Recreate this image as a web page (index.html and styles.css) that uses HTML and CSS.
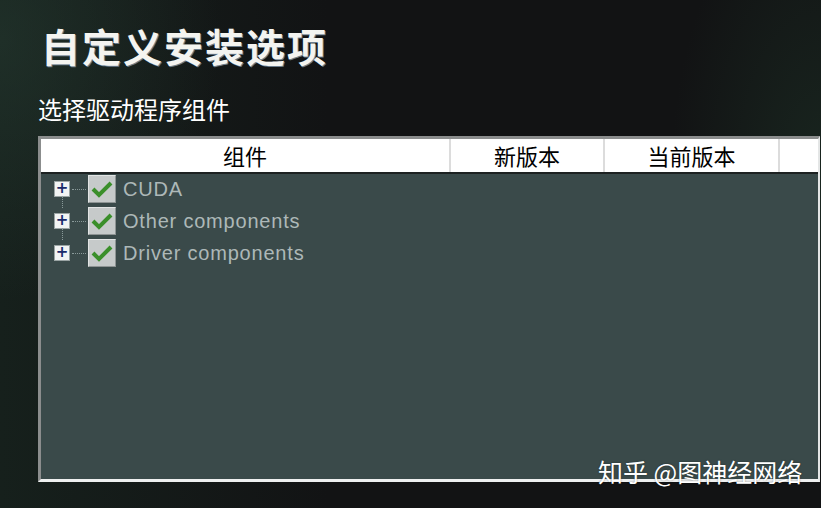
FILE: index.html
```html
<!DOCTYPE html>
<html lang="zh-CN">
<head>
  <meta charset="UTF-8">
  <title>自定义安装选项</title>
  <link rel="stylesheet" href="styles.css">
</head>
<body>
  <div class="page">
    <h1 class="title">自定义安装选项</h1>
    <p class="subtitle">选择驱动程序组件</p>

    <div class="list">
      <div class="list-head">
        <div class="col col-name">组件</div>
        <div class="col col-new">新版本</div>
        <div class="col col-cur">当前版本</div>
        <div class="col col-rest"></div>
      </div>
      <div class="list-body">
        <div class="row">
          <span class="expander">+</span>
          <span class="dots"></span>
          <span class="check"><svg width="22" height="18" viewBox="0 0 22 18"><path d="M2 9 L8 15 L20 3" fill="none" stroke="#3a8f2a" stroke-width="4"/></svg></span>
          <span class="label">CUDA</span>
        </div>
        <div class="row">
          <span class="expander">+</span>
          <span class="dots"></span>
          <span class="check"><svg width="22" height="18" viewBox="0 0 22 18"><path d="M2 9 L8 15 L20 3" fill="none" stroke="#3a8f2a" stroke-width="4"/></svg></span>
          <span class="label">Other components</span>
        </div>
        <div class="row">
          <span class="expander">+</span>
          <span class="dots"></span>
          <span class="check"><svg width="22" height="18" viewBox="0 0 22 18"><path d="M2 9 L8 15 L20 3" fill="none" stroke="#3a8f2a" stroke-width="4"/></svg></span>
          <span class="label">Driver components</span>
        </div>
      </div>
    </div>

    <div class="watermark">知乎 @图神经网络</div>
  </div>
</body>
</html>
```

FILE: styles.css
```css
body {
  margin: 0;
  width: 821px;
  height: 508px;
  overflow: hidden;
  background: #121314;
  font-family: "Noto Sans CJK SC", sans-serif;
}
.page {
  position: relative;
  height: 508px;
  padding-top: 19px;
  box-sizing: border-box;
  background:
    radial-gradient(ellipse 220px 260px at 0px 40px, rgba(40, 62, 52, 0.5), transparent),
    radial-gradient(ellipse 150px 300px at 821px 180px, rgba(30, 52, 40, 0.55), transparent),
    linear-gradient(90deg, #16201c 0%, #121314 40%, #121314 100%);
}
.title {
  margin: 0 0 0 41px;
  font-family: "Noto Sans CJK SC", serif;
  font-size: 39px;
  font-weight: bold;
  line-height: 52px;
  letter-spacing: 2px;
  color: #f4f4f0;
  text-shadow: 1px 1px 0 #6a7c8c;
}
.subtitle {
  margin: 23px 0 0 38px;
  font-size: 24px;
  line-height: 30px;
  color: #ffffff;
}
.list {
  margin: 12px 0 0 38px;
  width: 782px;
  border-top: 3px solid #8b8d8d;
  border-left: 3px solid #8b8d8d;
  border-right: 2px solid #e4e6e6;
  border-bottom: 3px solid #eef0f0;
  box-sizing: border-box;
}
.list-head {
  display: flex;
  height: 35px;
  background: #ffffff;
  border-bottom: 2px solid #1d2222;
  box-sizing: border-box;
}
.col {
  font-size: 22px;
  line-height: 33px;
  color: #000;
  text-align: center;
  border-right: 2px solid #dcdcdc;
}
.col-name { width: 408px; }
.col-new { width: 152px; }
.col-cur { width: 173px; }
.col-rest { flex: 1; border-right: none; }
.list-body {
  height: 305px;
  padding-top: 1px;
  background: #3a4a4a;
  box-sizing: border-box;
}
.row {
  display: flex;
  align-items: center;
  height: 28px;
  margin-bottom: 4px;
  padding-left: 13px;
  position: relative;
}
.row + .row::before {
  content: "";
  position: absolute;
  left: 21px;
  top: -11px;
  height: 12px;
  border-left: 1px dotted #8a9a9a;
}
.expander {
  width: 16px;
  height: 16px;
  box-sizing: border-box;
  background: #f2f4f4;
  border: 1px solid #9aa4a4;
  color: #1a2a6a;
  font-family: "DejaVu Sans", sans-serif;
  font-size: 15px;
  font-weight: bold;
  line-height: 13px;
  text-align: center;
}
.dots {
  width: 14px;
  margin: 0 2px;
  border-top: 1px dotted #8a9a9a;
}
.check {
  width: 28px;
  height: 28px;
  box-sizing: border-box;
  background: #c6caca;
  border: 1px solid #e2e4e4;
  border-right-color: #8e9494;
  border-bottom-color: #8e9494;
  display: flex;
  align-items: center;
  justify-content: center;
}
.label {
  margin-left: 7px;
  font-family: "Liberation Sans", sans-serif;
  font-size: 20px;
  letter-spacing: 0.8px;
  color: #adb8b8;
}
.watermark {
  position: absolute;
  left: 598px;
  top: 454px;
  font-size: 25px;
  line-height: 34px;
  color: #ffffff;
  text-shadow: 0 0 2px rgba(0, 0, 0, 0.4);
}
```
